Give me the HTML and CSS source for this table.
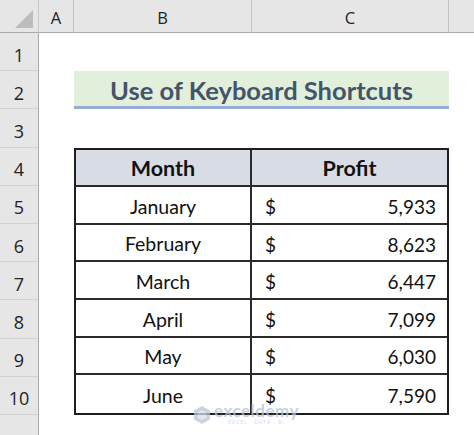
FILE: index.html
```html
<!DOCTYPE html>
<html>
<head>
<meta charset="utf-8">
<link rel="stylesheet" href="styles.css">
</head>
<body>
<div class="sheet">
  <div class="colheads">
    <div class="corner"><span class="tri"></span></div>
    <div class="colhead col-a">A</div>
    <div class="colhead col-b">B</div>
    <div class="colhead col-c">C</div>
    <div class="colhead col-d"></div>
  </div>
  <div class="body">
    <div class="rowheads">
      <div class="rowhead">1</div>
      <div class="rowhead">2</div>
      <div class="rowhead">3</div>
      <div class="rowhead">4</div>
      <div class="rowhead">5</div>
      <div class="rowhead">6</div>
      <div class="rowhead">7</div>
      <div class="rowhead">8</div>
      <div class="rowhead">9</div>
      <div class="rowhead">10</div>
      <div class="rowhead"></div>
    </div>
    <div class="cells">
      <div class="title">Use of Keyboard Shortcuts</div>
      <div class="table">
        <div class="th">Month</div>
        <div class="th th-last">Profit</div>
        <div class="td">January</div>
        <div class="td td-num"><span>$</span><span>5,933</span></div>
        <div class="td">February</div>
        <div class="td td-num"><span>$</span><span>8,623</span></div>
        <div class="td">March</div>
        <div class="td td-num"><span>$</span><span>6,447</span></div>
        <div class="td">April</div>
        <div class="td td-num"><span>$</span><span>7,099</span></div>
        <div class="td">May</div>
        <div class="td td-num"><span>$</span><span>6,030</span></div>
        <div class="td td-end">June</div>
        <div class="td td-num td-end"><span>$</span><span>7,590</span></div>
      </div>
    </div>
  </div>
  <div class="watermark">
    <svg class="wm-icon" width="18" height="20" viewBox="0 0 18 20">
      <polygon points="9,1 17,5.5 17,14.5 9,19 1,14.5 1,5.5" fill="#b9c6d8"/>
      <polygon points="9,5 13.5,7.5 13.5,12.5 9,15 4.5,12.5 4.5,7.5" fill="#d7dfea"/>
    </svg>
    <div class="wm-text">
      <span class="wm-name">exceldemy</span>
      <span class="wm-sub">EXCEL · DATA · BI</span>
    </div>
  </div>
</div>
</body>
</html>
```

FILE: styles.css
```css
* { box-sizing: border-box; }
html, body { margin: 0; padding: 0; background: #ffffff; }
.sheet {
  position: relative;
  width: 474px;
  height: 435px;
  overflow: hidden;
  display: flex;
  flex-direction: column;
  background: #ffffff;
}
.colheads {
  display: flex;
  height: 33px;
  flex: none;
}
.corner {
  width: 39px;
  background: #e6e6e6;
  border-right: 1px solid #c8c8c8;
  border-bottom: 1px solid #a9a9a9;
  position: relative;
}
.tri {
  position: absolute;
  right: 5px;
  bottom: 4px;
  width: 0;
  height: 0;
  border-left: 18px solid transparent;
  border-bottom: 18px solid #bdbdbd;
}
.colhead {
  background: #e6e6e6;
  border-right: 1px solid #c4c4c4;
  border-bottom: 1px solid #a9a9a9;
  display: flex;
  align-items: center;
  justify-content: center;
  font-family: "Open Sans", "Liberation Sans", sans-serif;
  font-size: 16.5px;
  color: #222222;
  padding-top: 2px;
}
.col-a { width: 35px; }
.col-b { width: 178px; }
.col-c { width: 197px; }
.col-d { flex: 1; border-right: none; }
.body {
  display: flex;
  flex: 1;
}
.rowheads {
  width: 39px;
  flex: none;
  display: flex;
  flex-direction: column;
  background: #e6e6e6;
  border-right: 1px solid #a9a9a9;
}
.rowhead {
  height: 38.2px;
  flex: none;
  border-bottom: 1px solid #d2d2d2;
  display: flex;
  align-items: center;
  justify-content: center;
  padding-top: 6px;
  font-family: "Open Sans", "Liberation Sans", sans-serif;
  font-size: 18px;
  color: #222222;
}
.cells {
  flex: 1;
  display: grid;
  grid-template-columns: 35px 178px 197px 1fr;
  grid-template-rows: repeat(11, 38.2px);
}
.title {
  grid-column: 2 / 4;
  grid-row: 2;
  background: #e2efda;
  border-bottom: 3px solid #98acda;
  display: flex;
  align-items: center;
  justify-content: center;
  font-family: "Lato", "Open Sans", sans-serif;
  font-weight: 700;
  font-size: 25.5px;
  color: #44546a;
  padding-top: 2px;
}
.table {
  grid-column: 2 / 4;
  grid-row: 4 / 11;
  display: grid;
  grid-template-columns: 176px 1fr;
  grid-template-rows: repeat(7, 1fr);
  border: 2px solid #1e1e1e;
  font-family: "Lato", "Open Sans", sans-serif;
  color: #111111;
  line-height: 1;
}
.th, .td {
  display: flex;
  align-items: center;
  justify-content: center;
  border-bottom: 2px solid #2a2a2a;
  padding-top: 3px;
}
.th:nth-child(odd), .td:nth-child(odd) {
  border-right: 2px solid #2a2a2a;
}
.th {
  background: #d8dde5;
  font-weight: 700;
  font-size: 21.5px;
}
.td {
  font-size: 19.5px;
}
.td-num {
  justify-content: space-between;
  padding: 3px 11px 0 13px;
  font-size: 19px;
}
.td-end { border-bottom: none; }
.watermark {
  position: absolute;
  left: 193px;
  top: 405px;
  display: flex;
  align-items: center;
  gap: 3px;
  opacity: 0.75;
}
.wm-text {
  display: flex;
  flex-direction: column;
  align-items: center;
  line-height: 0.75;
}
.wm-name {
  font-family: "Lato", "Open Sans", sans-serif;
  font-weight: 700;
  font-size: 17px;
  color: #b6c3d6;
  letter-spacing: 0.5px;
}
.wm-sub {
  font-family: "Open Sans", sans-serif;
  font-size: 5px;
  color: #c2cbd8;
  letter-spacing: 1px;
  margin-top: 3px;
}
```
